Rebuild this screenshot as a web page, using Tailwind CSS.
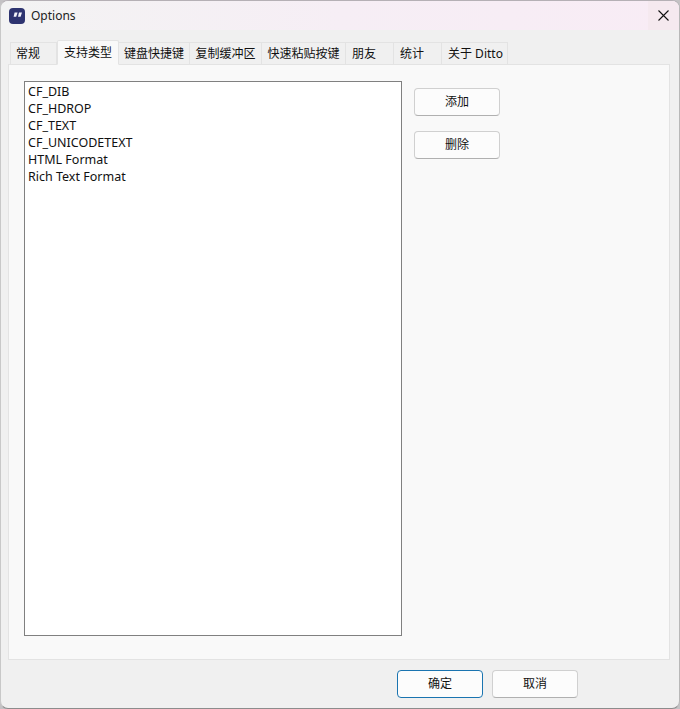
<!DOCTYPE html>
<html lang="zh">
<head>
<meta charset="utf-8">
<script src="https://cdn.jsdelivr.net/npm/@tailwindcss/browser@4"></script>
</head>
<body class="m-0 bg-[#c9c9c9]">
<div class="w-[680px] h-[709px] overflow-hidden bg-[#c4c2c4]">
<div class="w-[680px] h-[709px] flex flex-col rounded-[8px] overflow-hidden bg-[#f0f0f0] border-t border-b border-l border-r border-t-[#b5b0b5] border-b-[#8c8c8c] border-l-[#c8c8c8] border-r-[#b8b8b8] text-[12.5px] text-[#111] font-['Noto_Sans','Noto_Sans_CJK_SC',sans-serif]">
  <div class="h-[29px] shrink-0 flex items-center bg-gradient-to-r from-[#f3f3f3] via-[#f6eef5] to-[#f8ecf5]">
    <svg class="ml-[8px] w-[16px] h-[16px]" viewBox="0 0 16 16">
      <rect width="16" height="16" rx="4" fill="#2e3470"/>
      <path d="M5.6 4.5h3L7.2 8.8H4.6zM10 4.5h3l-1.4 4.3H9z" fill="#f4f4fa"/>
    </svg>
    <span class="ml-[6px] text-[12px] text-[#222]">Options</span>
    <div class="ml-auto w-[31px] h-[29px] bg-[#f5e9ef] flex items-center justify-center">
      <svg class="w-[11px] h-[11px]" viewBox="0 0 11 11"><path d="M0.5 0.5l10 10M10.5 0.5l-10 10" stroke="#111" stroke-width="1.1" fill="none"/></svg>
    </div>
  </div>
  <div class="flex items-end h-[34px] pl-[9px] shrink-0 relative z-10">
    <div class="w-[47px] h-[23px] -mb-px border border-[#e3e3e3] bg-[#f0f0f0] pl-[5px] leading-[21px] text-[12px]">常规</div>
    <div class="w-[62px] h-[25px] -mb-px border border-[#e3e3e3] border-b-[#f9f9f9] bg-[#f9f9f9] text-center leading-[23px] text-[12px] rounded-t-[2px]">支持类型</div>
    <div class="w-[71px] h-[23px] -mb-px border border-l-0 border-[#e3e3e3] bg-[#f0f0f0] text-center leading-[22px] text-[12px]">键盘快捷键</div>
    <div class="w-[72px] h-[23px] -mb-px border border-l-0 border-[#e3e3e3] bg-[#f0f0f0] text-center leading-[22px] text-[12px]">复制缓冲区</div>
    <div class="w-[84px] h-[23px] -mb-px border border-l-0 border-[#e3e3e3] bg-[#f0f0f0] text-center leading-[22px] text-[12px]">快速粘贴按键</div>
    <div class="w-[48px] h-[23px] -mb-px border border-l-0 border-[#e3e3e3] bg-[#f0f0f0] pl-[6px] leading-[22px] text-[12px]">朋友</div>
    <div class="w-[48px] h-[23px] -mb-px border border-l-0 border-[#e3e3e3] bg-[#f0f0f0] pl-[6px] leading-[22px] text-[12px]">统计</div>
    <div class="w-[66px] h-[23px] -mb-px border border-l-0 border-[#e3e3e3] bg-[#f0f0f0] pl-[6px] leading-[22px] text-[12px] whitespace-nowrap">关于 Ditto</div>
  </div>
  <div class="ml-[7px] w-[662px] h-[596px] shrink-0 border border-[#e3e3e3] bg-[#f9f9f9] flex items-start pt-[16px] pl-[15px]">
    <div class="w-[378px] h-[555px] border border-[#808080] bg-white pl-[3px] pt-px leading-[17px] shrink-0">
      <div>CF_DIB</div>
      <div>CF_HDROP</div>
      <div>CF_TEXT</div>
      <div>CF_UNICODETEXT</div>
      <div>HTML Format</div>
      <div>Rich Text Format</div>
    </div>
    <div class="ml-[12px] pt-[7px] flex flex-col gap-[15px]">
      <div class="w-[86px] h-[28px] rounded-[4px] border border-[#d0d0d0] border-b-[#b0b0b0] bg-[#fcfcfc] flex items-center justify-center text-[12px]">添加</div>
      <div class="w-[86px] h-[28px] rounded-[4px] border border-[#d0d0d0] border-b-[#b0b0b0] bg-[#fcfcfc] flex items-center justify-center text-[12px]">删除</div>
    </div>
  </div>
  <div class="flex pt-[10px] pl-[396px] gap-[9px]">
    <div class="w-[86px] h-[28px] rounded-[4px] border border-[#1a74b0] bg-[#fcfcfc] flex items-center justify-center text-[12px]">确定</div>
    <div class="w-[86px] h-[28px] rounded-[4px] border border-[#d0d0d0] border-b-[#b0b0b0] bg-[#fcfcfc] flex items-center justify-center text-[12px]">取消</div>
  </div>
</div>
</div>
</body>
</html>
